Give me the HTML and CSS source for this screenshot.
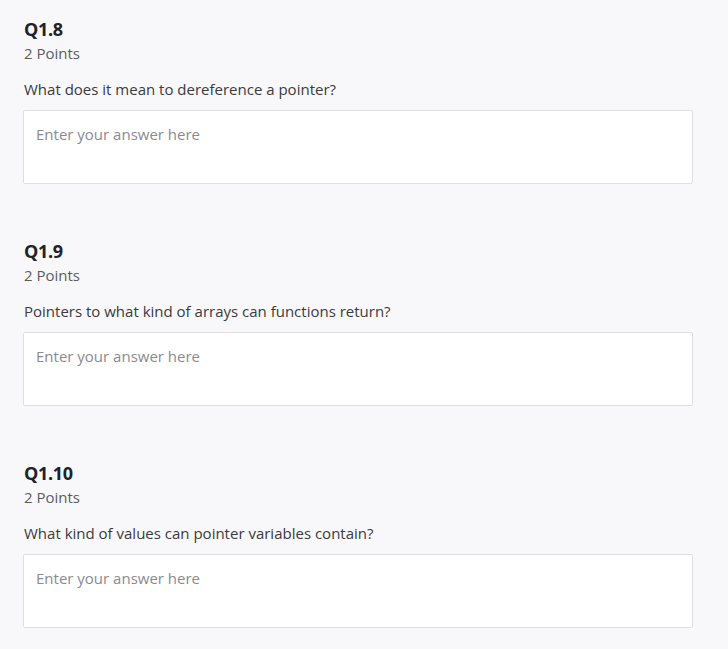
FILE: index.html
```html
<!DOCTYPE html>
<html lang="en">

<head>
    <meta charset="UTF-8">
    <meta name="viewport" content="width=device-width, initial-scale=1.0">
    <title>Questions</title>
    <link rel="stylesheet" href="styles.css">
</head>

<body>
    <div class="questions">
        <div class="question">
            <h2>Q1.8</h2>
            <div class="points">2 Points</div>
            <p class="prompt">What does it mean to dereference a pointer?</p>
            <textarea class="answer" placeholder="Enter your answer here"></textarea>
        </div>
        <div class="question">
            <h2>Q1.9</h2>
            <div class="points">2 Points</div>
            <p class="prompt">Pointers to what kind of arrays can functions return?</p>
            <textarea class="answer" placeholder="Enter your answer here"></textarea>
        </div>
        <div class="question">
            <h2>Q1.10</h2>
            <div class="points">2 Points</div>
            <p class="prompt">What kind of values can pointer variables contain?</p>
            <textarea class="answer" placeholder="Enter your answer here"></textarea>
        </div>
    </div>
</body>

</html>
```

FILE: styles.css
```css
body {
    margin: 0;
    background-color: #f8f8fa;
    font-family: "Open Sans", "Liberation Sans", sans-serif;
    color: #333338;
}

.questions {
    padding: 17px 35px 0 23px;
}

.question {
    margin-bottom: 55px;
}

.question:last-child {
    margin-bottom: 0;
}

.question h2 {
    margin: 0 0 0 1px;
    font-size: 18px;
    line-height: 24px;
    font-weight: 700;
    color: #222226;
    letter-spacing: -0.3px;
}

.points {
    margin: 1px 0 0 1px;
    font-size: 15px;
    line-height: 22px;
    color: #5c5c62;
}

.prompt {
    margin: 14px 0 10px 1px;
    font-size: 15px;
    line-height: 22px;
    color: #3a3a40;
}

.answer {
    display: block;
    box-sizing: border-box;
    width: 100%;
    height: 74px;
    padding: 13px 12px;
    border: 1px solid #dedee4;
    border-radius: 2px;
    background-color: white;
    font-family: inherit;
    font-size: 15px;
    resize: none;
}

.answer::placeholder {
    color: #8a8a92;
}

.answer:focus {
    outline: 0;
}
```
